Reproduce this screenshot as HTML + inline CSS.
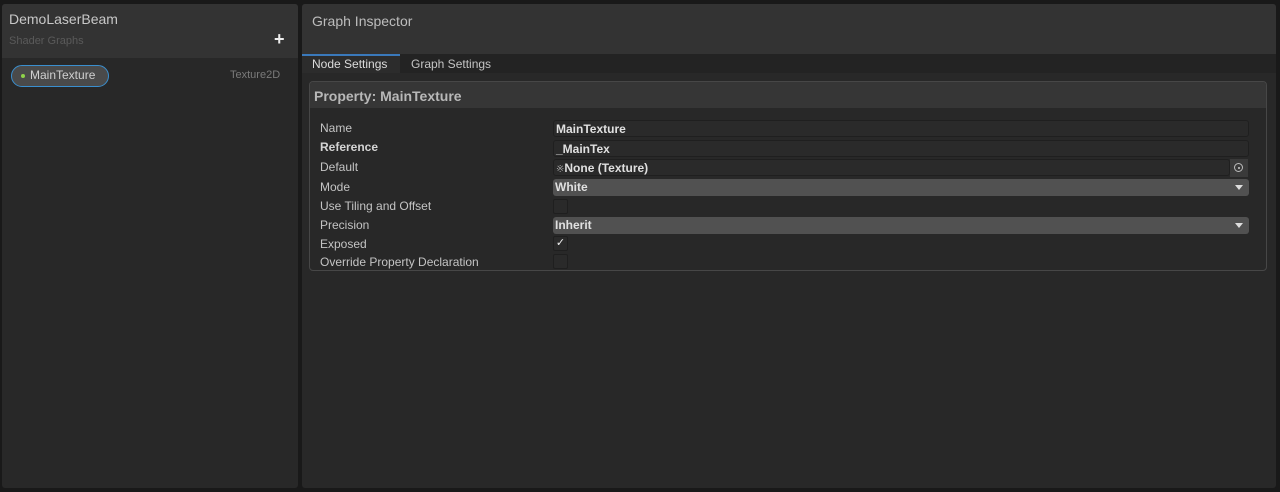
<!DOCTYPE html><html><head><style>
body{margin:0;width:1280px;height:492px;background:#191919;font-family:"Liberation Sans",sans-serif;font-size:12px;color:#c4c4c4;position:relative;overflow:hidden}
.a{position:absolute}
.lbl{left:320px;font-size:12px;color:#c4c4c4}
.f{left:553px;width:696px;height:17px;background:#2a2a2a;border:1px solid #1f1f1f;border-radius:3px;box-sizing:border-box;color:#e0e0e0;font-weight:bold;font-size:12px;padding-left:2px;line-height:16px}
.d{background:#515151;border:none}
.d:after{content:"";position:absolute;right:6px;top:6px;border-left:4px solid transparent;border-right:4px solid transparent;border-top:5px solid #ddd}
.cb{left:553px;width:13px;height:13px;background:#2a2a2a;border:1px solid #1f1f1f;border-radius:2px}
</style></head><body>
<div class="a" style="left:2px;top:4px;width:296px;height:484px;background:#282828;border-radius:3px"></div>
<div class="a" style="left:2px;top:4px;width:296px;height:54px;background:#333;border-radius:3px 3px 0 0"></div>
<div class="a" style="left:9px;top:11px;font-size:14px;color:#c8c8c8">DemoLaserBeam</div>
<div class="a" style="left:9px;top:35px;font-size:11px;color:#5a5a5a">Shader Graphs</div>
<div class="a" style="left:274px;top:29px;font-size:18px;color:#eee;font-weight:bold">+</div>
<div class="a" style="left:11px;top:65px;width:96px;height:20px;border:1.5px solid #3a8fcf;border-radius:11px;background:#4a4a4a"></div>
<div class="a" style="left:21px;top:74px;width:4px;height:4px;border-radius:2px;background:#8fd34a"></div>
<div class="a" style="left:30px;top:68px;font-size:12px;color:#d0d0d0">MainTexture</div>
<div class="a" style="left:230px;top:69px;font-size:11px;color:#7a7a7a">Texture2D</div>

<div class="a" style="left:302px;top:4px;width:974px;height:484px;background:#282828;border-radius:3px"></div>
<div class="a" style="left:302px;top:4px;width:974px;height:50px;background:#333;border-radius:3px 3px 0 0"></div>
<div class="a" style="left:312px;top:13px;font-size:14px;color:#bdbdbd">Graph Inspector</div>
<div class="a" style="left:302px;top:54px;width:974px;height:19px;background:#232323"></div>
<div class="a" style="left:302px;top:54px;width:98px;height:19px;background:#2c2c2c;border-top:2px solid #3a79bb;box-sizing:border-box"></div>
<div class="a" style="left:312px;top:57px;color:#dcdcdc">Node Settings</div>
<div class="a" style="left:411px;top:57px;color:#c4c4c4">Graph Settings</div>
<div class="a" style="left:309px;top:81px;width:958px;height:190px;border:1px solid #474747;border-radius:4px;box-sizing:border-box;background:#282828"></div>
<div class="a" style="left:310px;top:82px;width:956px;height:26px;background:#363636;border-radius:3px 3px 0 0"></div>
<div class="a" style="left:314px;top:88px;font-size:14px;font-weight:bold;color:#b8b8b8">Property: MainTexture</div>

<div class="a lbl" style="top:121px">Name</div>
<div class="a f" style="top:120px">MainTexture</div>
<div class="a lbl" style="top:140px;font-weight:bold;color:#d4d4d4">Reference</div>
<div class="a f" style="top:140px">_MainTex</div>
<div class="a lbl" style="top:160px">Default</div>
<div class="a f" style="top:159px;width:677px"><span style="font-weight:normal;color:#999;font-size:10px">&#8251;</span>None (Texture)</div>
<div class="a" style="left:1230px;top:159px;width:18px;height:18px;background:#3a3a3a"><div style="margin:4px;width:9px;height:9px;border:1px solid #bbb;border-radius:50%;box-sizing:border-box;position:relative"><div style="position:absolute;left:2.5px;top:2.5px;width:2px;height:2px;background:#ccc;border-radius:1px"></div></div></div>
<div class="a lbl" style="top:180px">Mode</div>
<div class="a f d" style="top:179px">White</div>
<div class="a lbl" style="top:199px">Use Tiling and Offset</div>
<div class="a cb" style="top:199px"></div>
<div class="a lbl" style="top:218px">Precision</div>
<div class="a f d" style="top:217px">Inherit</div>
<div class="a lbl" style="top:237px">Exposed</div>
<div class="a cb" style="top:236px;color:#eee;font-size:11px;line-height:13px;text-align:center">&#10003;</div>
<div class="a lbl" style="top:255px">Override Property Declaration</div>
<div class="a cb" style="top:254px"></div>
</body></html>
